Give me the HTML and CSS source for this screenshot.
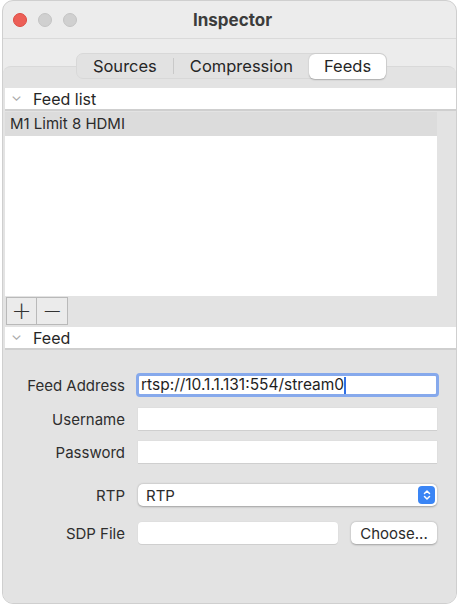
FILE: index.html
```html
<!DOCTYPE html>
<html>
  <head>
    <meta charset="UTF-8">
    <title>Inspector</title>
    <link rel="stylesheet" href="styles.css">
  </head>
  <body>
    <div class="window">
      <header class="titlebar">
        <div class="lights">
          <span class="light red"></span>
          <span class="light"></span>
          <span class="light"></span>
        </div>
        <h1>Inspector</h1>
      </header>

      <nav class="tabs">
        <div class="segmented">
          <span class="seg">Sources</span>
          <span class="seg sep">Compression</span>
          <span class="seg active">Feeds</span>
        </div>
      </nav>

      <section class="pane">
        <div class="disclosure">
          <span class="chev">&#x2304;</span>Feed list
        </div>
        <div class="list-wrap">
          <ul class="list">
            <li class="selected">M1 Limit 8 HDMI</li>
          </ul>
          <div class="gutter"></div>
        </div>
        <div class="plusminus">
          <button class="pm">+</button>
          <button class="pm">&minus;</button>
        </div>
        <div class="disclosure">
          <span class="chev">&#x2304;</span>Feed
        </div>

        <form class="form">
          <label>Feed Address</label>
          <div class="field focus">rtsp://10.1.1.131:554/stream0<span class="caret"></span></div>

          <label>Username</label>
          <div class="field"></div>

          <label>Password</label>
          <div class="field"></div>

          <label class="gap">RTP</label>
          <div class="popup gap">RTP
            <span class="stepper">
              <svg width="10" height="12" viewBox="0 0 10 12">
                <path d="M2.5 4.5 L5 2 L7.5 4.5 M2.5 7.5 L5 10 L7.5 7.5" fill="none" stroke="#fff" stroke-width="1.5" stroke-linecap="round" stroke-linejoin="round"/>
              </svg>
            </span>
          </div>

          <label class="last">SDP File</label>
          <div class="sdp">
            <div class="field"></div>
            <button class="choose" type="button">Choose...</button>
          </div>
        </form>
      </section>
    </div>
  </body>
</html>
```

FILE: styles.css
```css
html * {
  box-sizing: border-box;
}

body {
  margin: 0;
  background: #ffffff;
  font-family: Inter, "Noto Sans", sans-serif;
  color: #2b2b2b;
}

.window {
  margin-left: 2px;
  width: 455px;
  height: 604px;
  background: #ececec;
  border: 1px solid #cfcfcf;
  border-radius: 11px;
  overflow: hidden;
  display: flex;
  flex-direction: column;
}

.titlebar {
  height: 38px;
  flex: none;
  display: flex;
  align-items: center;
  border-bottom: 1px solid #dadada;
}

.lights {
  display: flex;
  gap: 11px;
  padding-left: 10px;
}

.light {
  width: 14px;
  height: 14px;
  border-radius: 50%;
  background: #d0d0d0;
  border: 1px solid #c4c4c4;
}

.light.red {
  background: #ec5f57;
  border-color: #dd4b42;
}

.titlebar h1 {
  margin: 0;
  flex: 1;
  text-align: center;
  font-size: 17px;
  font-weight: 700;
  color: #3c3c3c;
  padding-right: 68px;
}

.tabs {
  display: flex;
  justify-content: center;
  padding: 14px 0 0 4px;
  position: relative;
  z-index: 1;
}

.segmented {
  display: flex;
  align-items: center;
  height: 26px;
  background: #e2e2e2;
  border-radius: 7px;
  border: 1px solid #d8d8d8;
}

.seg {
  font-size: 16.5px;
  padding: 0 16px;
  color: #262626;
  line-height: 24px;
}

.seg.sep {
  border-left: 1px solid #c9c9c9;
  line-height: 16px;
}

.seg.active {
  background: #ffffff;
  border-radius: 6px;
  line-height: 25px;
  padding: 0 15px;
  box-shadow: 0 0.5px 1.5px rgba(0, 0, 0, 0.25);
}

.pane {
  flex: 1;
  margin: -13px 0 0 0;
  background: #e3e3e3;
  border-top: 1px solid #d9d9d9;
  border-radius: 8px 8px 0 0;
  padding: 21px 0 0 2px;
  display: flex;
  flex-direction: column;
}

.disclosure {
  background: #ffffff;
  height: 23px;
  display: flex;
  align-items: center;
  font-size: 16px;
  border-bottom: 2px solid #cfcfcf;
  color: #262626;
}

.chev {
  width: 28px;
  padding-left: 6px;
  color: #a8a8a8;
  font-size: 14px;
  line-height: 10px;
  position: relative;
  top: -3px;
}

.list-wrap {
  display: flex;
  height: 184px;
  margin-top: 1px;
}

.list {
  flex: 1;
  margin: 0;
  padding: 0;
  list-style: none;
  background: #ffffff;
}

.list li {
  height: 24px;
  line-height: 24px;
  padding-left: 5px;
  font-size: 15px;
}

.list li.selected {
  background: #dcdcdc;
}

.gutter {
  width: 19px;
  background: #e3e3e3;
}

.plusminus {
  display: flex;
  height: 29px;
  padding-top: 1px;
  padding-left: 1px;
}

.pm {
  width: 31px;
  height: 28px;
  background: #ebebeb;
  border: 1px solid #b9b9b9;
  font-family: "DejaVu Sans", sans-serif;
  font-size: 24px;
  font-weight: 300;
  color: #333;
  padding: 0;
  line-height: 24px;
}

.pm + .pm {
  border-left: none;
}

.plusminus + .disclosure {
  margin-top: 2px;
}

.form {
  display: grid;
  grid-template-columns: 120px 299px;
  column-gap: 13px;
  row-gap: 11px;
  align-items: center;
  padding-top: 23px;
  font-size: 15px;
}

.form label {
  text-align: right;
  color: #2e2e2e;
}

.field {
  height: 22px;
  background: #ffffff;
  box-shadow: 0 1px 0 #cfcfcf, 0 0 0 0.5px #dcdcdc;
}

.field.focus {
  height: 24px;
  margin-left: -2px;
  margin-right: -2px;
  border: 3px solid #86a9ec;
  border-radius: 4px;
  box-shadow: none;
  padding-left: 2px;
  line-height: 18px;
  font-size: 15.5px;
  color: #1e1e1e;
  display: flex;
  align-items: center;
}

.caret {
  display: inline-block;
  width: 2px;
  height: 17px;
  background: #2f6fe4;
}

.gap {
  margin-top: 10px;
}

.popup {
  height: 22px;
  background: #ffffff;
  border-radius: 5px;
  box-shadow: 0 0.5px 2px rgba(0, 0, 0, 0.3);
  display: flex;
  align-items: center;
  padding-left: 8px;
  position: relative;
  font-size: 15px;
}

.stepper {
  position: absolute;
  right: 2px;
  top: 2px;
  width: 17px;
  height: 18px;
  border-radius: 4px;
  background: #3a85f5;
  display: flex;
  align-items: center;
  justify-content: center;
}

.sdp {
  display: flex;
  align-items: center;
  gap: 13px;
  margin-top: 5px;
}

.sdp .field {
  flex: 1;
  border-radius: 4px;
}

.form label.last {
  margin-top: 5px;
}

.choose {
  height: 22px;
  width: 86px;
  background: #ffffff;
  border: none;
  border-radius: 5px;
  box-shadow: 0 0.5px 2px rgba(0, 0, 0, 0.3);
  font-family: Inter, "Noto Sans", sans-serif;
  font-size: 15px;
  color: #2b2b2b;
  padding: 0;
}
```
